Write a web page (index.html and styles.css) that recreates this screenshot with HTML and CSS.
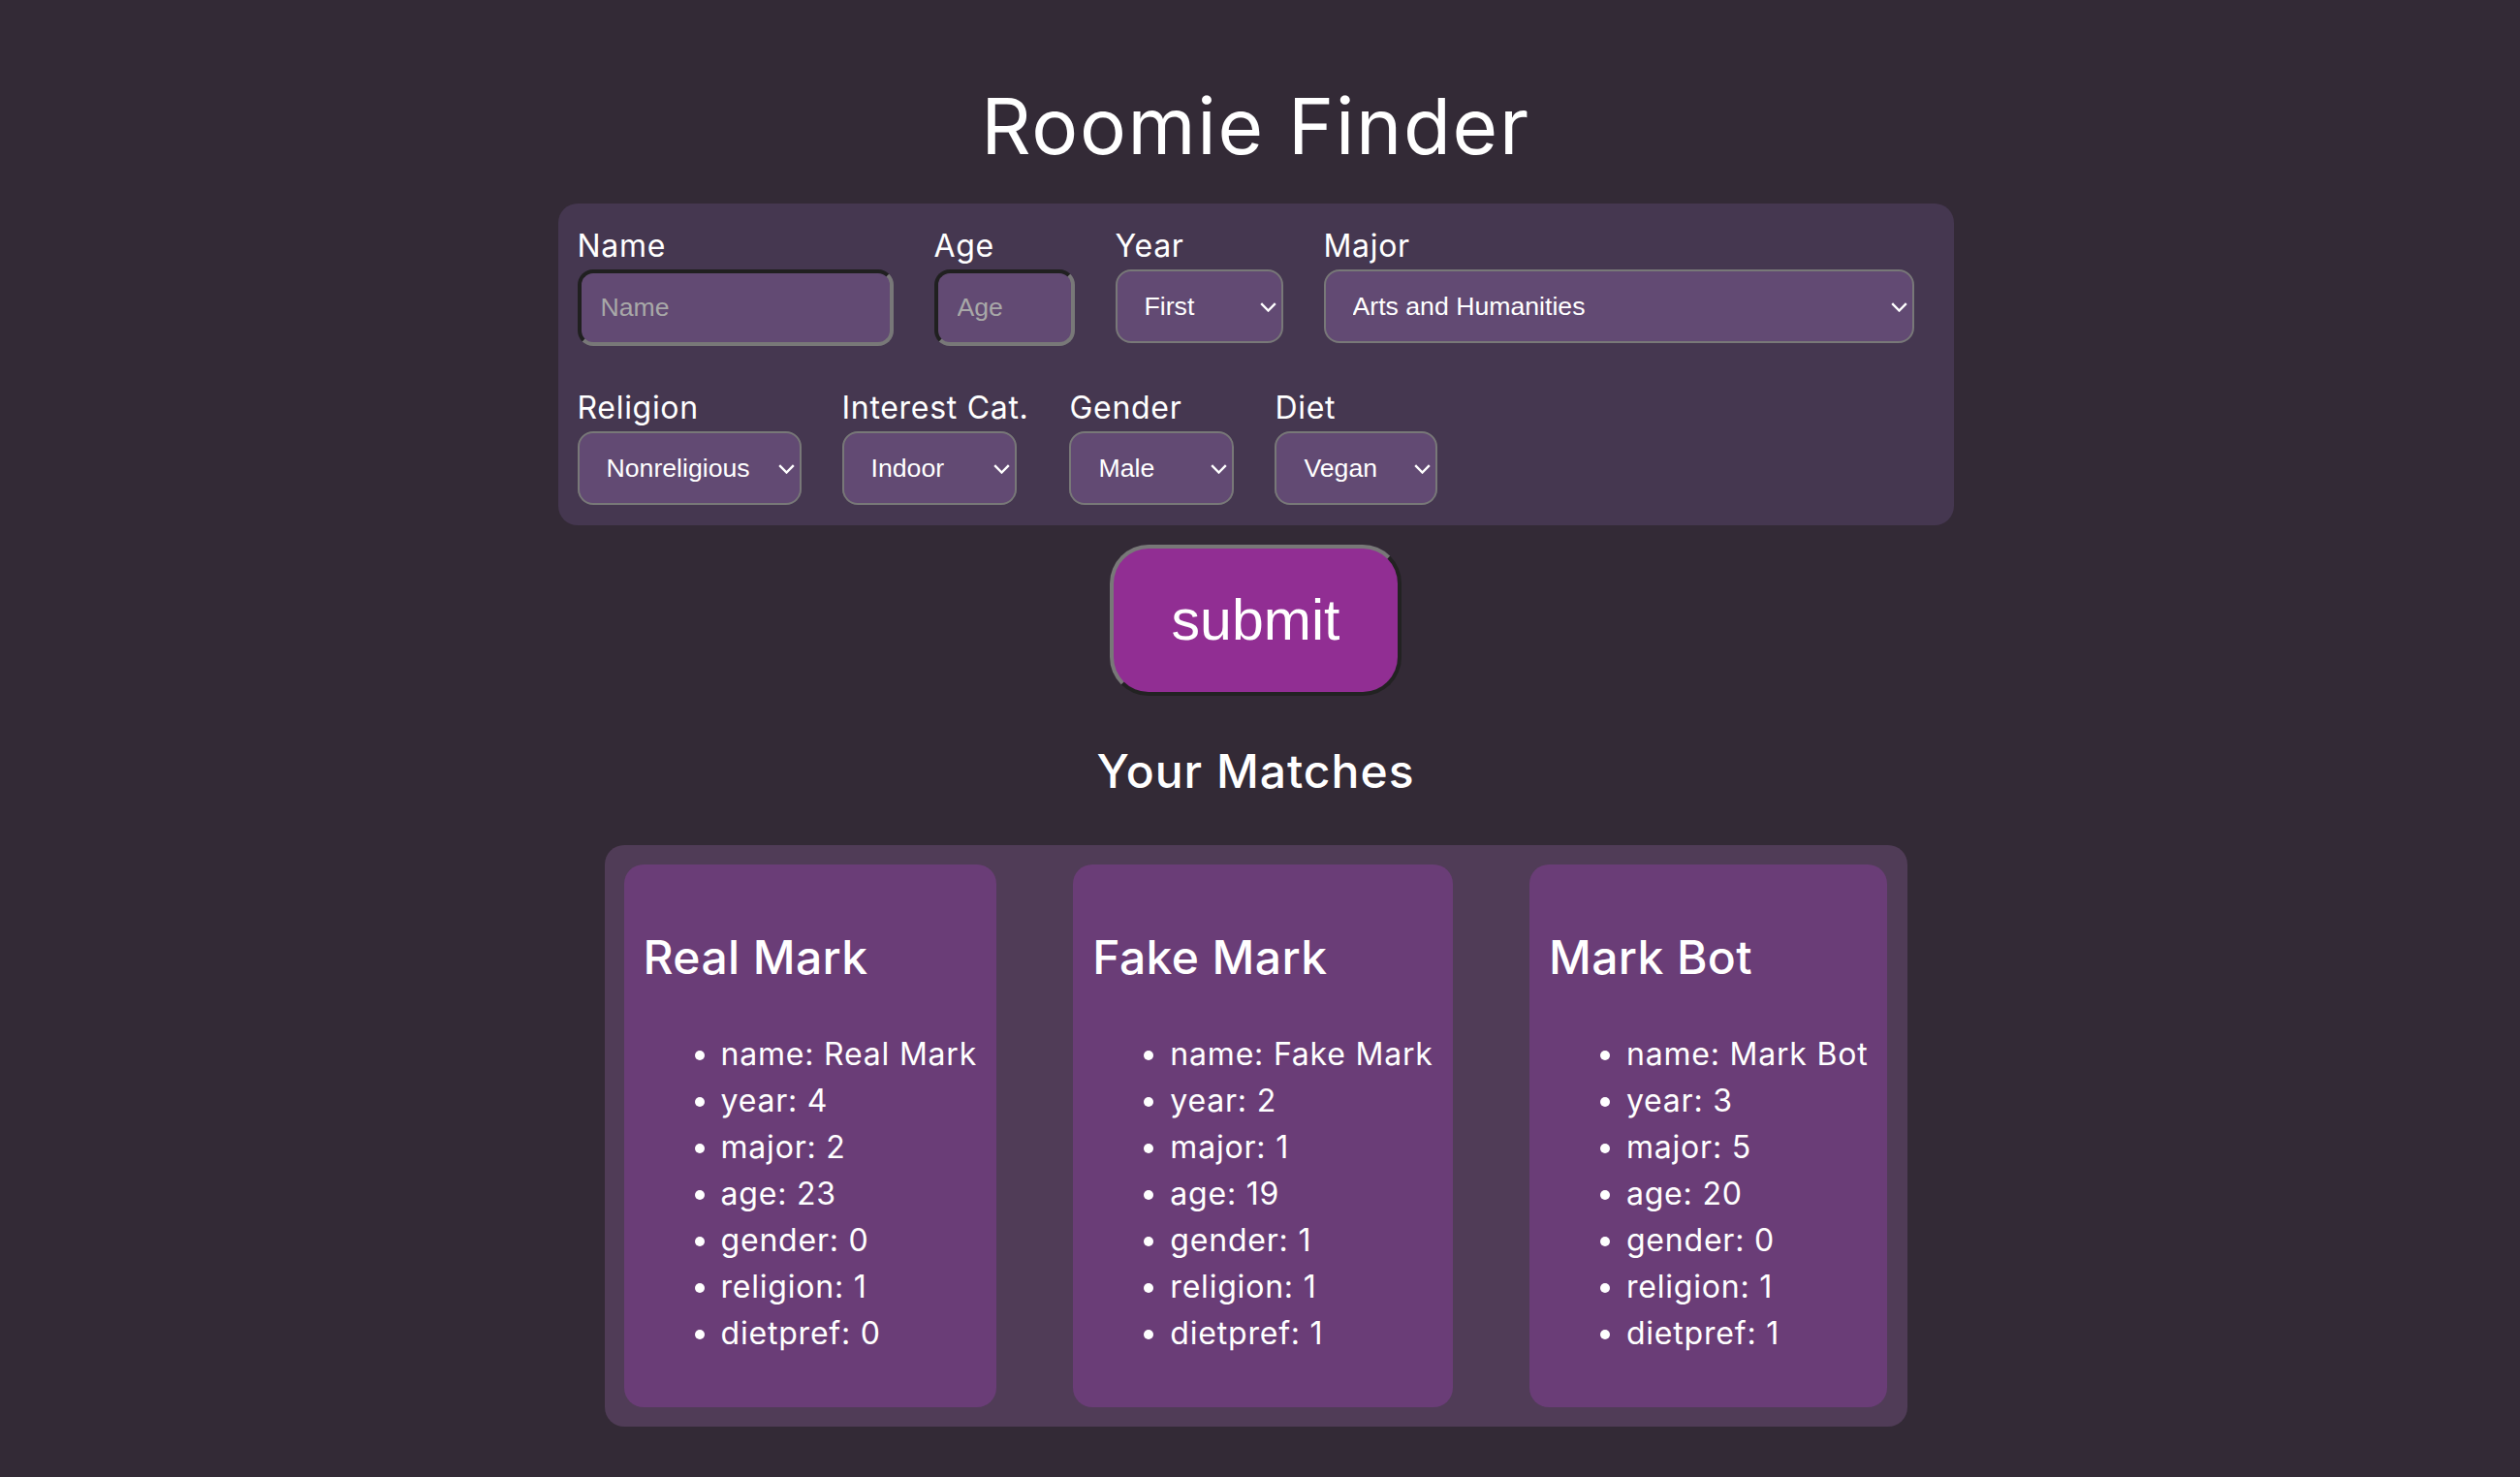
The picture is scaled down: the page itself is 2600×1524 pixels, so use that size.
FILE: index.html
```html
<!DOCTYPE html>
<html lang="en">
<head>
<meta charset="utf-8">
<title>Roomie Finder</title>
<link rel="stylesheet" href="styles.css">
</head>
<body>
<main class="page">
  <h1 class="title">Roomie Finder</h1>
  <form class="form-panel">
    <div class="form-row">
      <div class="field">
        <label class="field-label" for="name">Name</label>
        <input class="text-input input-name" id="name" type="text" placeholder="Name">
      </div>
      <div class="field">
        <label class="field-label" for="age">Age</label>
        <input class="text-input input-age" id="age" type="text" placeholder="Age">
      </div>
      <div class="field">
        <label class="field-label" for="year">Year</label>
        <div class="select-wrap">
          <select class="select sel-year" id="year">
            <option>First</option><option>Second</option><option>Third</option><option>Fourth</option>
          </select>
          <svg class="chevron" viewBox="0 0 17 10" aria-hidden="true"><path d="M1.2 1.2 L8.5 8.5 L15.8 1.2"/></svg>
        </div>
      </div>
      <div class="field">
        <label class="field-label" for="major">Major</label>
        <div class="select-wrap">
          <select class="select sel-major" id="major">
            <option>Arts and Humanities</option><option>Business</option><option>Engineering</option><option>Health and Medicine</option><option>Natural Sciences</option><option>Social Sciences</option>
          </select>
          <svg class="chevron" viewBox="0 0 17 10" aria-hidden="true"><path d="M1.2 1.2 L8.5 8.5 L15.8 1.2"/></svg>
        </div>
      </div>
    </div>
    <div class="form-row">
      <div class="field">
        <label class="field-label" for="religion">Religion</label>
        <div class="select-wrap">
          <select class="select sel-religion" id="religion">
            <option>Nonreligious</option><option>Christian</option><option>Muslim</option><option>Jewish</option><option>Hindu</option><option>Buddhist</option>
          </select>
          <svg class="chevron" viewBox="0 0 17 10" aria-hidden="true"><path d="M1.2 1.2 L8.5 8.5 L15.8 1.2"/></svg>
        </div>
      </div>
      <div class="field">
        <label class="field-label" for="interest">Interest Cat.</label>
        <div class="select-wrap">
          <select class="select sel-interest" id="interest">
            <option>Indoor</option><option>Outdoor</option>
          </select>
          <svg class="chevron" viewBox="0 0 17 10" aria-hidden="true"><path d="M1.2 1.2 L8.5 8.5 L15.8 1.2"/></svg>
        </div>
      </div>
      <div class="field">
        <label class="field-label" for="gender">Gender</label>
        <div class="select-wrap">
          <select class="select sel-gender" id="gender">
            <option>Male</option><option>Female</option><option>Other</option>
          </select>
          <svg class="chevron" viewBox="0 0 17 10" aria-hidden="true"><path d="M1.2 1.2 L8.5 8.5 L15.8 1.2"/></svg>
        </div>
      </div>
      <div class="field">
        <label class="field-label" for="diet">Diet</label>
        <div class="select-wrap">
          <select class="select sel-diet" id="diet">
            <option>Vegan</option><option>Halal</option><option>Kosher</option><option>None</option>
          </select>
          <svg class="chevron" viewBox="0 0 17 10" aria-hidden="true"><path d="M1.2 1.2 L8.5 8.5 L15.8 1.2"/></svg>
        </div>
      </div>
    </div>
  </form>
  <div class="submit-row">
    <button class="submit-btn" type="button">submit</button>
  </div>
  <h2 class="matches-title">Your Matches</h2>
  <section class="results">
    <article class="match-card">
      <h2 class="card-name">Real Mark</h2>
      <ul class="card-list">
        <li>name: Real Mark</li>
        <li>year: 4</li>
        <li>major: 2</li>
        <li>age: 23</li>
        <li>gender: 0</li>
        <li>religion: 1</li>
        <li>dietpref: 0</li>
      </ul>
    </article>
    <article class="match-card">
      <h2 class="card-name">Fake Mark</h2>
      <ul class="card-list">
        <li>name: Fake Mark</li>
        <li>year: 2</li>
        <li>major: 1</li>
        <li>age: 19</li>
        <li>gender: 1</li>
        <li>religion: 1</li>
        <li>dietpref: 1</li>
      </ul>
    </article>
    <article class="match-card">
      <h2 class="card-name">Mark Bot</h2>
      <ul class="card-list">
        <li>name: Mark Bot</li>
        <li>year: 3</li>
        <li>major: 5</li>
        <li>age: 20</li>
        <li>gender: 0</li>
        <li>religion: 1</li>
        <li>dietpref: 1</li>
      </ul>
    </article>
  </section>
</main>
</body>
</html>
```

FILE: styles.css
```css
* { box-sizing: border-box; }

html, body {
  margin: 0;
  background: #332a36;
}

body {
  font-family: Inter, "Noto Sans", sans-serif;
  color: #ffffff;
  padding: 70px 9px 40px 0;
}

.page {
  display: flex;
  flex-direction: column;
  align-items: center;
}

.title {
  font-size: 80px;
  font-weight: 400;
  line-height: 120px;
  letter-spacing: 1.7px;
  margin: 0 0 20px;
}

.form-panel {
  width: 1440px;
  background: #453750;
  border-radius: 20px;
  padding: 20px 20px 21px;
  display: flex;
  flex-direction: column;
  gap: 40px;
}

.form-row {
  display: flex;
  gap: 42px;
  align-items: flex-start;
}

.field {
  display: flex;
  flex-direction: column;
  align-items: flex-start;
}

.field-label {
  font-size: 32px;
  line-height: 48px;
  letter-spacing: 0.7px;
  white-space: nowrap;
}

.text-input {
  font-family: "Liberation Sans", Arial, sans-serif;
  font-size: 26.67px;
  height: 79px;
  padding: 0 20px;
  border: 4px solid;
  border-color: #202020 #787878 #787878 #202020;
  border-radius: 16px;
  background: #624a73;
  color: #ffffff;
  outline: none;
}

.text-input::placeholder { color: #a8a8a8; }

.input-name { width: 326px; }
.input-age { width: 145px; }

.select-wrap {
  position: relative;
  display: flex;
}

.select {
  appearance: none;
  -webkit-appearance: none;
  font-family: "Liberation Sans", Arial, sans-serif;
  font-size: 26.67px;
  height: 76px;
  padding: 0 36px 0 28px;
  border: 2px solid #787878;
  border-radius: 16px;
  background: #624a73;
  color: #ffffff;
  outline: none;
}

.chevron {
  position: absolute;
  right: 7px;
  top: 50%;
  width: 17px;
  height: 10px;
  margin-top: -4px;
  fill: none;
  stroke: #ffffff;
  stroke-width: 2.4;
  pointer-events: none;
}

.sel-year { width: 173px; }
.sel-major { width: 609px; }
.sel-religion { width: 231px; }
.sel-interest { width: 180px; }
.sel-gender { width: 170px; }
.sel-diet { width: 168px; }

.submit-row {
  margin-top: 20px;
  display: flex;
  justify-content: center;
}

.submit-btn {
  font-family: "Liberation Sans", Arial, sans-serif;
  font-size: 59px;
  padding: 40px 60px;
  border: 4px solid;
  border-color: #787878 #222222 #222222 #787878;
  border-radius: 40px;
  background: #912e93;
  color: #ffffff;
}

.matches-title {
  font-size: 48px;
  font-weight: 500;
  line-height: 72px;
  letter-spacing: 1px;
  margin: 42px 0 40px;
}

.results {
  width: 1344px;
  background: #503c57;
  border-radius: 20px;
  padding: 20px;
  display: flex;
  justify-content: space-between;
}

.match-card {
  background: #6a3d77;
  border-radius: 20px;
  padding: 20px;
}

.card-name {
  font-size: 48px;
  font-weight: 500;
  line-height: 72px;
  letter-spacing: 0.4px;
  margin: 40px 0;
}

.card-list {
  font-size: 32px;
  line-height: 48px;
  letter-spacing: 0.8px;
  margin: 32px 0;
  padding-left: 80px;
}
```
